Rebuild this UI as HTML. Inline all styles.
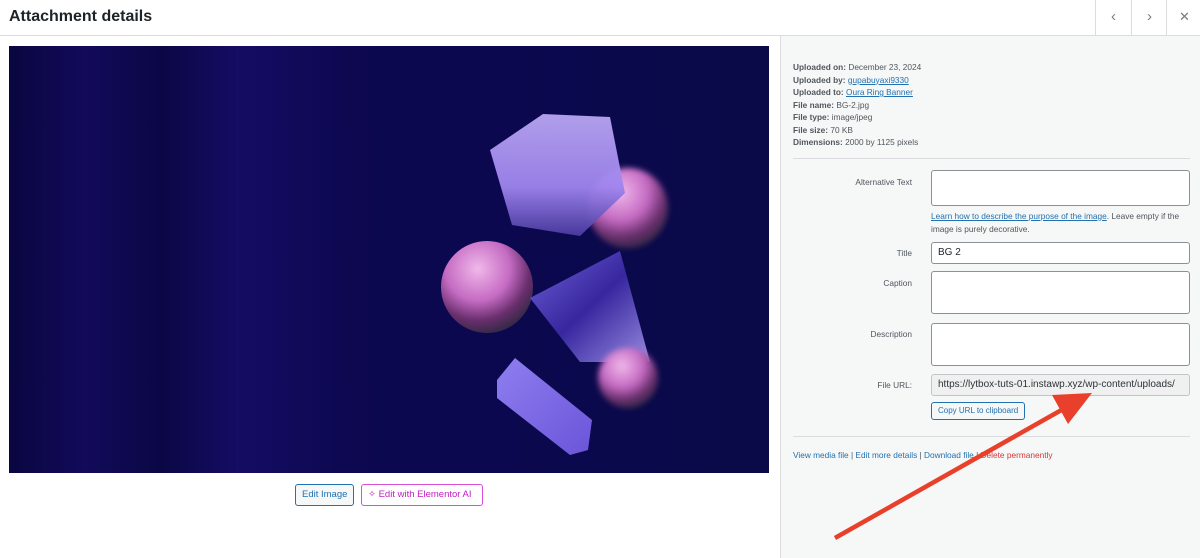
<!DOCTYPE html>
<html><head><meta charset="utf-8"><style>
*{box-sizing:border-box;margin:0;padding:0}
body{width:1200px;height:558px;overflow:hidden;background:#fff;font-family:"Liberation Sans",sans-serif;position:relative}
.hdr{position:absolute;left:0;top:0;width:1200px;height:36px;border-bottom:1px solid #dcdcde;background:#fff}
.hdr h1{position:absolute;left:9px;top:8px;font-size:16px;font-weight:bold;color:#1d2327}
.nb{position:absolute;top:0;width:36px;height:35px;border-left:1px solid #dcdcde;color:#787c82;font-size:15px;text-align:center;line-height:34px}
.side{position:absolute;left:780px;top:36px;width:420px;height:522px;background:#f6f7f7;border-left:1px solid #dcdcde}
.img{position:absolute;left:9px;top:46px;width:760px;height:427px;background:linear-gradient(90deg,#0a0640 0%,#120a5a 10%,#0b0745 20%,#150c63 30%,#0d0850 45%,#0b0850 60%,#0a0a48 100%);overflow:hidden}
.meta{position:absolute;left:12px;top:25px;font-size:8.3px;line-height:12.5px;color:#50575e}
.meta b{color:#50575e}
a{color:#2271b1}
.lbl{position:absolute;right:0;font-size:8.3px;color:#50575e;text-align:right;width:131px}
.inp{position:absolute;left:150px;width:259px;background:#fff;border:1px solid #8c8f94;border-radius:3px}
.hr{position:absolute;left:12px;width:397px;height:1px;background:#dcdcde}
.btn{position:absolute;top:484px;height:22px;border:1px solid #2271b1;border-radius:3px;font-size:9.5px;line-height:20px;padding:0 6px;background:#f6f7f7;color:#2271b1}
</style></head><body>
<div class="hdr"><h1>Attachment details</h1>
<div class="nb" style="left:1095px">&#8249;</div>
<div class="nb" style="left:1131px">&#8250;</div>
<div class="nb" style="left:1166px;font-size:13px">&#10005;</div>
</div>
<div class="img">
<svg width="760" height="427" viewBox="9 46 760 427">
<defs>
<radialGradient id="sp" cx="0.4" cy="0.3" r="0.7"><stop offset="0" stop-color="#f0b8ea"/><stop offset="0.5" stop-color="#c56bc3"/><stop offset="0.8" stop-color="#6a2f6e"/><stop offset="1" stop-color="#3a2a4a"/></radialGradient>
<linearGradient id="cu" x1="0" y1="0" x2="0" y2="1"><stop offset="0" stop-color="#b9a6f2"/><stop offset="0.6" stop-color="#9e84ee"/><stop offset="1" stop-color="#4a3aa0"/></linearGradient>
<linearGradient id="py" x1="0" y1="0" x2="1" y2="1"><stop offset="0" stop-color="#7b6ae6"/><stop offset="0.5" stop-color="#3c2aa8"/><stop offset="1" stop-color="#a79af0"/></linearGradient>
<linearGradient id="cr" x1="0" y1="0" x2="1" y2="1"><stop offset="0" stop-color="#8f7ef0"/><stop offset="1" stop-color="#6a55d8"/></linearGradient>
<filter id="bl"><feGaussianBlur stdDeviation="3"/></filter>
</defs>
<circle cx="628" cy="208" r="40" fill="url(#sp)" filter="url(#bl)"/>
<polygon points="490,150 543,114 610,117 625,193 580,236 512,225" fill="url(#cu)" opacity="0.95"/>
<circle cx="487" cy="287" r="46" fill="url(#sp)"/>
<polygon points="530,298 620,251 650,362 580,362" fill="url(#py)" opacity="0.9"/>
<circle cx="628" cy="378" r="30" fill="url(#sp)" filter="url(#bl)"/>
<polygon points="497,380 515,358 592,420 588,450 570,455 497,398" fill="url(#cr)"/>
</svg>
</div>
<div class="btn" style="left:295px">Edit Image</div>
<div class="btn" style="left:361px;width:122px;border-color:#d94fd8;color:#c01fc0;background:#fff">&#10023; Edit with Elementor AI</div>

<div class="side">
<div class="meta">
<b>Uploaded on:</b> December 23, 2024<br>
<b>Uploaded by:</b> <a style="text-decoration:underline">gupabuyaxi9330</a><br>
<b>Uploaded to:</b> <a style="text-decoration:underline">Oura Ring Banner</a><br>
<b>File name:</b> BG-2.jpg<br>
<b>File type:</b> image/jpeg<br>
<b>File size:</b> 70 KB<br>
<b>Dimensions:</b> 2000 by 1125 pixels
</div>
<div class="hr" style="top:122px"></div>
<div class="lbl" style="left:0;top:141px">Alternative Text</div>
<div class="inp" style="top:134px;height:36px"></div>
<div style="position:absolute;left:150px;top:174px;width:262px;font-size:8.3px;line-height:12.5px;color:#50575e"><a style="text-decoration:underline">Learn how to describe the purpose of the image</a>. Leave empty if the image is purely decorative.</div>
<div class="lbl" style="left:0;top:212px">Title</div>
<div class="inp" style="top:206px;height:22px;font-size:10px;line-height:20px;padding-left:6px;color:#1d2327">BG 2</div>
<div class="lbl" style="left:0;top:242px">Caption</div>
<div class="inp" style="top:235px;height:43px"></div>
<div class="lbl" style="left:0;top:293px">Description</div>
<div class="inp" style="top:287px;height:43px"></div>
<div class="lbl" style="left:0;top:344px">File URL:</div>
<div class="inp" style="top:338px;height:22px;background:#f0f0f1;border-color:#c3c4c7;font-size:10px;line-height:20px;padding-left:6px;color:#2c3338;overflow:hidden;white-space:nowrap">https://lytbox-tuts-01.instawp.xyz/wp-content/uploads/</div>
<div style="position:absolute;left:150px;top:366px;height:18px;border:1px solid #2271b1;border-radius:3px;font-size:8px;line-height:16px;padding:0 6px;color:#2271b1;background:#f6f7f7">Copy URL to clipboard</div>
<div class="hr" style="top:400px"></div>
<div style="position:absolute;left:12px;top:414px;font-size:8.3px;color:#50575e"><a>View media file</a> | <a>Edit more details</a> | <a>Download file</a> | <span style="color:#d63638">Delete permanently</span></div>
</div>
<svg style="position:absolute;left:0;top:0" width="1200" height="558">
<line x1="835" y1="538" x2="1065" y2="408" stroke="#e8402a" stroke-width="4.5"/>
<polygon points="1092,393 1052,395 1068,424" fill="#e8402a"/>
</svg>
</body></html>
